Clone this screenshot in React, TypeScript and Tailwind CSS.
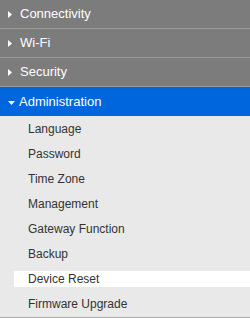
import React from "react";

const Tri = ({ down }: { down?: boolean }) =>
  down ? (
    <svg width="7" height="4" viewBox="0 0 7 4" className="mr-[4px] mt-[3px]">
      <polygon points="0,0 7,0 3.5,4" fill="#fff" />
    </svg>
  ) : (
    <svg width="4" height="7" viewBox="0 0 4 7" className="mr-[8px]">
      <polygon points="0,0 4,3.5 0,7" fill="#fff" />
    </svg>
  );

export default function App() {
  const items = [
    "Language",
    "Password",
    "Time Zone",
    "Management",
    "Gateway Function",
    "Backup",
    "Device Reset",
    "Firmware Upgrade",
  ];
  return (
    <div
      className="w-[250px] h-[318px] bg-[#e9e9e9] overflow-hidden"
      style={{ fontFamily: '"Liberation Sans", Arial, sans-serif' }}
    >
      {["Connectivity", "Wi-Fi", "Security"].map((t) => (
        <div
          key={t}
          className="h-[29px] bg-[#7c7c7c] border-b border-[#9a9a9a] flex items-center pl-[8px] text-white text-[13px]"
        >
          <Tri />
          <span>{t}</span>
        </div>
      ))}
      <div className="h-[29px] bg-[#0066dd] flex items-center pl-[8px] text-white text-[13px]">
        <Tri down />
        <span>Administration</span>
      </div>
      <div className="flex flex-col">
        {items.map((t) => (
          <div key={t} className="h-[25px] flex items-center">
            <div
              className={
                "ml-[14px] pl-[14px] h-[16px] flex-1 flex items-center text-[12px] text-[#333] " +
                (t === "Device Reset" ? "bg-white" : "")
              }
            >
              {t}
            </div>
          </div>
        ))}
      </div>
      <div className="h-[2px] mt-[1px] bg-[#a8a8a8]" />
    </div>
  );
}
